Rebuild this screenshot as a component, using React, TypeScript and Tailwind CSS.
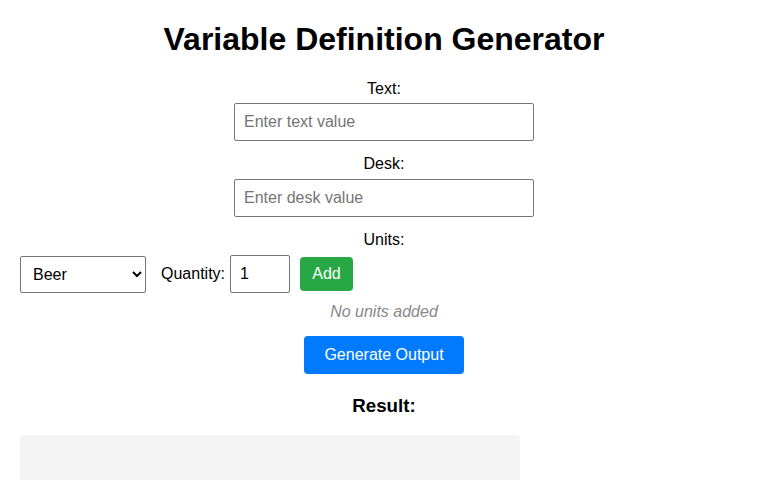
export default function App() {
  return (
    <div className="min-h-screen bg-white px-5 text-black font-['Liberation_Sans',Arial,sans-serif]">
      <h1 className="pt-[21px] mb-[22px] text-center text-[32px] leading-[37px] font-bold">
        Variable Definition Generator
      </h1>

      <div className="flex flex-col items-center">
        <label className="block text-base leading-[18px] mb-[5px]">Text:</label>
        <input
          type="text"
          placeholder="Enter text value"
          className="w-[300px] h-[38px] px-[9px] border border-[#767676] rounded-[2px] text-base placeholder:text-[#757575]"
        />
        <label className="block text-base leading-[18px] mt-[14px] mb-[6px]">Desk:</label>
        <input
          type="text"
          placeholder="Enter desk value"
          className="w-[300px] h-[38px] px-[9px] border border-[#767676] rounded-[2px] text-base placeholder:text-[#757575]"
        />
        <label className="block text-base leading-[18px] mt-[14px] mb-[6px]">Units:</label>
      </div>

      <div className="flex items-center h-[38px]">
        <select className="w-[126px] h-[37px] pl-[8px] pr-1 border border-[#767676] rounded-[2px] text-base bg-white">
          <option>Beer</option>
          <option>Wine</option>
          <option>Water</option>
        </select>
        <span className="ml-[15px] text-base">Quantity:</span>
        <input
          type="number"
          defaultValue={1}
          className="ml-[5px] w-[60px] h-[38px] px-[9px] border border-[#767676] rounded-[2px] text-base"
        />
        <button className="ml-[10px] w-[53px] h-[34px] rounded bg-[#28a745] text-white text-base">
          Add
        </button>
      </div>

      <p className="mt-[10px] text-center italic text-[#888888] text-base leading-[18px]">
        No units added
      </p>

      <div className="flex justify-center mt-[15px]">
        <button className="w-[160px] h-[38px] rounded bg-[#007bff] text-white text-base">
          Generate Output
        </button>
      </div>

      <h3 className="mt-[21px] text-center text-[18.72px] leading-[22px] font-bold">Result:</h3>

      <div className="mt-[18px] w-[500px] h-[120px] rounded bg-[#f4f4f4]" />
    </div>
  );
}
